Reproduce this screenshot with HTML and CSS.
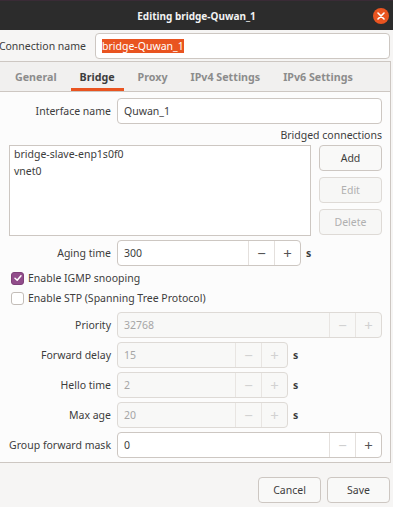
FILE: index.html
```html
<!DOCTYPE html>
<html lang="en">
  <head>
    <meta charset="UTF-8" />
    <meta name="viewport" content="width=device-width, initial-scale=1.0" />
    <title>Editing bridge-Quwan_1</title>
    <link rel="stylesheet" href="styles.css">
  </head>
  <body>
    <header class="titlebar">
      <span></span>
      <h1>Editing bridge-Quwan_1</h1>
      <button class="close" aria-label="Close">
        <svg width="8" height="8" viewBox="0 0 8 8">
          <path d="M1 1L7 7M7 1L1 7" stroke="#fff" stroke-width="1.6" stroke-linecap="round" />
        </svg>
      </button>
    </header>

    <main class="dialog">
      <section class="conn_row">
        <label>Connection name</label>
        <div class="entry"><span class="sel">bridge-Quwan_1</span></div>
      </section>

      <section class="notebook">
        <nav class="tabs">
          <span>General</span>
          <span class="valgt">Bridge</span>
          <span>Proxy</span>
          <span>IPv4 Settings</span>
          <span>IPv6 Settings</span>
        </nav>

        <div class="page">
          <div class="row">
            <label>Interface name</label>
            <div class="entry">Quwan_1</div>
          </div>

          <p class="bridged">Bridged connections</p>

          <div class="slaves">
            <ul class="list">
              <li>bridge-slave-enp1s0f0</li>
              <li>vnet0</li>
            </ul>
            <div class="knapper">
              <button>Add</button>
              <button disabled>Edit</button>
              <button disabled>Delete</button>
            </div>
          </div>

          <div class="row aging">
            <label>Aging time</label>
            <div class="with_unit">
              <div class="spin short">
                <span class="val">300</span>
                <span class="step">&minus;</span>
                <span class="step">+</span>
              </div>
              <span class="unit">s</span>
            </div>
          </div>

          <div class="check on"><span class="box"><svg width="10" height="10" viewBox="0 0 10 10"><path d="M2 5.2L4.2 7.3L8 2.8" fill="none" stroke="#fff" stroke-width="1.5" stroke-linecap="round" stroke-linejoin="round" /></svg></span>Enable IGMP snooping</div>
          <div class="check"><span class="box"></span>Enable STP (Spanning Tree Protocol)</div>

          <div class="row stp">
            <label>Priority</label>
            <div class="spin off">
              <span class="val">32768</span>
              <span class="step">&minus;</span>
              <span class="step">+</span>
            </div>
          </div>

          <div class="row">
            <label>Forward delay</label>
            <div class="with_unit">
              <div class="spin off mid">
                <span class="val">15</span>
                <span class="step">&minus;</span>
                <span class="step">+</span>
              </div>
              <span class="unit">s</span>
            </div>
          </div>

          <div class="row">
            <label>Hello time</label>
            <div class="with_unit">
              <div class="spin off mid">
                <span class="val">2</span>
                <span class="step">&minus;</span>
                <span class="step">+</span>
              </div>
              <span class="unit">s</span>
            </div>
          </div>

          <div class="row">
            <label>Max age</label>
            <div class="with_unit">
              <div class="spin off mid">
                <span class="val">20</span>
                <span class="step">&minus;</span>
                <span class="step">+</span>
              </div>
              <span class="unit">s</span>
            </div>
          </div>

          <div class="row last">
            <label>Group forward mask</label>
            <div class="spin">
              <span class="val">0</span>
              <span class="step dim">&minus;</span>
              <span class="step">+</span>
            </div>
          </div>
        </div>
      </section>

      <footer class="actions">
        <button>Cancel</button>
        <button>Save</button>
      </footer>
    </main>
  </body>
</html>
```

FILE: styles.css
```css
* {
  margin: 0;
  padding: 0;
  box-sizing: border-box;
  --bg: #f6f5f4;
  --line: #cdc7c2;
  --line_off: #dedad6;
  --text: #3d3d3d;
  --grey: #a3a3a3;
  --orange: #e95420;
  --purple: #924d8b;
}

body {
  width: 393px;
  height: 507px;
  overflow: hidden;
  background-color: var(--bg);
  color: var(--text);
  font-family: "Noto Sans", "Open Sans", sans-serif;
  font-size: 10.5px;
}

button {
  font: inherit;
  color: inherit;
}

.titlebar {
  height: 30px;
  background-color: #2c2c2c;
  border-top: 1px solid #3a2b36;
  display: grid;
  grid-template-columns: 1fr auto 1fr;
  align-items: center;
  color: #f2f2f2;
}

.titlebar h1 {
  font-size: 10px;
  font-weight: bold;
}

.close {
  justify-self: end;
  margin-right: 4px;
  width: 16px;
  height: 16px;
  border-radius: 50%;
  border: none;
  background-color: var(--orange);
  display: flex;
  align-items: center;
  justify-content: center;
}

.dialog {
  display: flex;
  flex-direction: column;
}

.conn_row {
  display: grid;
  grid-template-columns: 90px 1fr;
  gap: 5px;
  align-items: center;
  padding: 2px 3px 0 0;
  height: 29px;
}

.conn_row label {
  text-align: right;
  white-space: nowrap;
  direction: rtl;
  overflow: hidden;
  padding-right: 4px;
}

.entry {
  height: 26px;
  background-color: #fff;
  border: 1px solid var(--line);
  border-radius: 4px;
  padding: 0 6px;
  display: flex;
  align-items: center;
}

.sel {
  background-color: var(--orange);
  color: #fff;
}

.notebook {
  margin: 2px 2px 0 -1px;
  border: 1px solid var(--line);
  background-color: #fcfcfc;
}

.tabs {
  display: flex;
  height: 30px;
  background-color: #f1f0ef;
  border-bottom: 1px solid var(--line);
  padding-left: 14px;
  gap: 21px;
  font-weight: bold;
  font-size: 10.7px;
  color: #8c8c8c;
}

.tabs span {
  display: flex;
  align-items: center;
  padding: 3px 1px 0;
  border-bottom: 3px solid transparent;
}

.tabs .valgt {
  color: var(--text);
  border-bottom-color: var(--orange);
  margin: 0 -8px;
  padding: 3px 9px 0;
}

.page {
  padding: 6px 8px 4px 9px;
  display: flex;
  flex-direction: column;
}

.row {
  display: grid;
  grid-template-columns: 102px 1fr;
  gap: 6px;
  align-items: center;
  height: 26px;
  margin-bottom: 4px;
}

.row.last {
  margin-bottom: 0;
}

.row label {
  text-align: right;
  white-space: nowrap;
}

.bridged {
  text-align: right;
  height: 17px;
  line-height: 14px;
}

.slaves {
  display: flex;
  gap: 8px;
  height: 91px;
  margin-bottom: 4px;
}

.list {
  flex: 1;
  list-style: none;
  background-color: #fff;
  border: 1px solid var(--line);
  padding: 0 4px;
  line-height: 17px;
}

.knapper {
  width: 63px;
  display: flex;
  flex-direction: column;
  gap: 6px;
}

.knapper button,
.actions button {
  height: 26px;
  border: 1px solid var(--line);
  border-radius: 4px;
  background-color: #f9f9f8;
}

.knapper button:disabled {
  color: #b0b0b0;
  border-color: var(--line_off);
  background-color: #f7f7f6;
}

.with_unit {
  display: flex;
  align-items: center;
  gap: 5px;
}

.unit {
  font-weight: bold;
}

.spin {
  display: flex;
  height: 26px;
  background-color: #fff;
  border: 1px solid var(--line);
  border-radius: 4px;
  flex: 1;
}

.spin.short {
  flex: 0 0 184px;
}

.spin.mid {
  flex: 0 0 171px;
}

.val {
  flex: 1;
  display: flex;
  align-items: center;
  padding-left: 6px;
}

.step {
  width: 26px;
  border-left: 1px solid #e4e0dd;
  display: flex;
  align-items: center;
  justify-content: center;
  font-size: 15px;
  color: #555;
}

.step.dim {
  color: #cfcfcf;
}

.spin.off {
  background-color: #f8f8f7;
  border-color: var(--line_off);
  color: #a6a6a6;
}

.spin.off .step {
  color: #d2d2d2;
  border-left-color: #e8e5e2;
}

.aging {
  margin-bottom: 2px;
}

.check {
  display: flex;
  align-items: center;
  gap: 4px;
  height: 20px;
  padding-left: 2px;
}

.box {
  width: 13px;
  height: 13px;
  border: 1px solid #c3bdb8;
  border-radius: 3px;
  background-color: #fff;
  display: flex;
  align-items: center;
  justify-content: center;
}

.check.on .box {
  background-color: var(--purple);
  border-color: #7f4179;
}

.stp {
  margin-top: 4px;
}

.actions {
  display: flex;
  justify-content: flex-end;
  gap: 6px;
  padding: 14px 3px 0 0;
}

.actions button {
  width: 63px;
  height: 26px;
}
```
